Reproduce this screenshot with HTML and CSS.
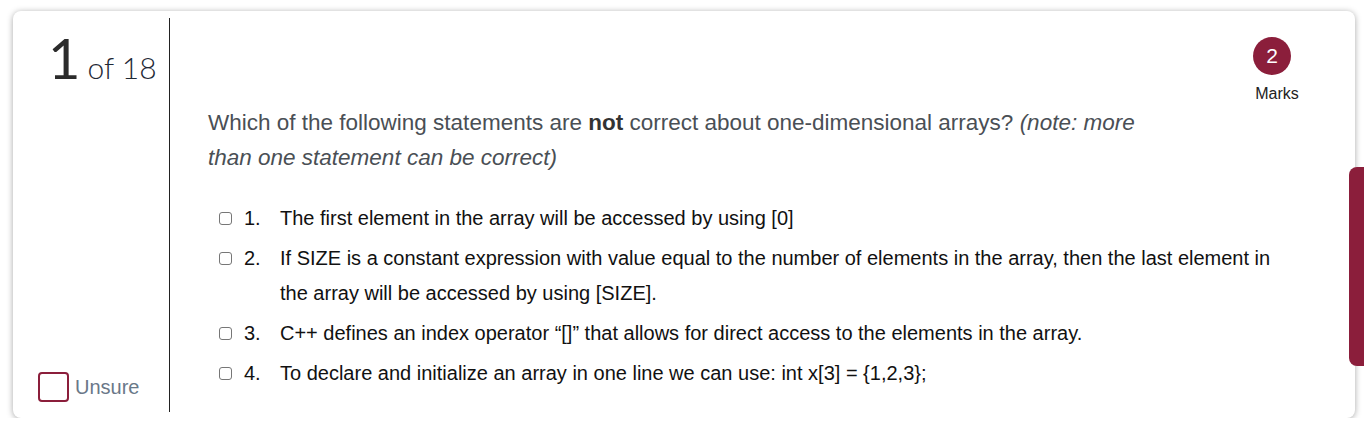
FILE: index.html
```html
<!DOCTYPE html>
<html lang="en">
<head>
	<meta charset="UTF-8">
	<title>Question 1 of 18</title>
	<link rel="stylesheet" href="styles.css">
</head>
<body>
	<section class="card">
		<div class="side">
			<div class="counter">
				<span class="counter-num">1</span>
				<span class="counter-total">of 18</span>
			</div>
			<label class="unsure">
				<span class="unsure-box"></span>
				<span class="unsure-text">Unsure</span>
			</label>
		</div>
		<div class="main">
			<p class="question">Which of the following statements are <b>not</b> correct about one-dimensional arrays? <i>(note: more than one statement can be correct)</i></p>
			<ol class="options">
				<li>
					<span class="opt-check"></span>
					<span class="opt-num">1.</span>
					<span class="opt-text">The first element in the array will be accessed by using [0]</span>
				</li>
				<li>
					<span class="opt-check"></span>
					<span class="opt-num">2.</span>
					<span class="opt-text">If SIZE is a constant expression with value equal to the number of elements in the array, then the last element in the array will be accessed by using [SIZE].</span>
				</li>
				<li>
					<span class="opt-check"></span>
					<span class="opt-num">3.</span>
					<span class="opt-text">C++ defines an index operator “[]” that allows for direct access to the elements in the array.</span>
				</li>
				<li>
					<span class="opt-check"></span>
					<span class="opt-num">4.</span>
					<span class="opt-text">To declare and initialize an array in one line we can use: int x[3] = {1,2,3};</span>
				</li>
			</ol>
			<div class="marks">
				<span class="marks-num">2</span>
				<span class="marks-label">Marks</span>
			</div>
		</div>
	</section>
	<a class="side-tab" href="javascript:;"></a>
</body>
</html>
```

FILE: styles.css
```css
body, p, ol {
	padding: 0;
	margin: 0;
}
body {
	background: #fff;
	font-family: "Liberation Sans", Arial, sans-serif;
	overflow: hidden;
}
.card {
	display: flex;
	position: relative;
	box-sizing: border-box;
	height: 407px;
	margin: 11px 9px 0 13px;
	padding: 7px 0 6px;
	background: #fff;
	border-radius: 8px;
	box-shadow: 0 1px 6px rgba(0, 0, 0, .35);
}
.side {
	display: flex;
	flex-direction: column;
	justify-content: space-between;
	width: 156px;
	border-right: 1px solid #222;
}
.counter {
	display: flex;
	align-items: baseline;
	padding: 12px 0 0 35px;
	white-space: nowrap;
	font-family: Lato, "Noto Sans", sans-serif;
	color: #1f2a36;
}
.counter-num {
	font-size: 56px;
	line-height: 56px;
	font-weight: 400;
	color: #2b2b2b;
}
.counter-total {
	margin-left: 7px;
	font-size: 30px;
	font-weight: 300;
}
.unsure {
	display: flex;
	align-items: center;
	padding: 0 0 10px 25px;
	cursor: pointer;
}
.unsure-box {
	width: 27px;
	height: 26px;
	border: 2px solid #8b1e3b;
	border-radius: 4px;
}
.unsure-text {
	margin-left: 6px;
	font-size: 20px;
	color: #6a7888;
}
.main {
	flex: 1;
	padding: 87px 65px 0 38px;
}
.question {
	max-width: 950px;
	font-size: 22.5px;
	line-height: 35px;
	color: #4a4f55;
}
.question b {
	color: #333;
}
.options {
	list-style: none;
	margin-top: 26px;
	padding-left: 11px;
}
.options li {
	display: flex;
	align-items: flex-start;
	margin-bottom: 5px;
	font-size: 20px;
	line-height: 35px;
	color: #111;
}
.opt-check {
	flex: none;
	box-sizing: border-box;
	width: 13px;
	height: 13px;
	margin-top: 11px;
	border: 1px solid #767676;
	border-radius: 3px;
}
.opt-num {
	flex: none;
	width: 36px;
	margin-left: 12px;
}
.marks {
	position: absolute;
	top: 26px;
	right: 48px;
	display: flex;
	flex-direction: column;
	align-items: center;
	width: 60px;
}
.marks-num {
	width: 38px;
	height: 38px;
	margin-right: 10px;
	border-radius: 50%;
	background: #8b1e3b;
	color: #fff;
	font-size: 21px;
	line-height: 38px;
	text-align: center;
}
.marks-label {
	margin-top: 10px;
	font-size: 16px;
	color: #222;
}
.side-tab {
	position: absolute;
	top: 167px;
	right: 0;
	width: 15px;
	height: 199px;
	background: #8b1e3b;
	border-radius: 8px 0 0 8px;
}
```
